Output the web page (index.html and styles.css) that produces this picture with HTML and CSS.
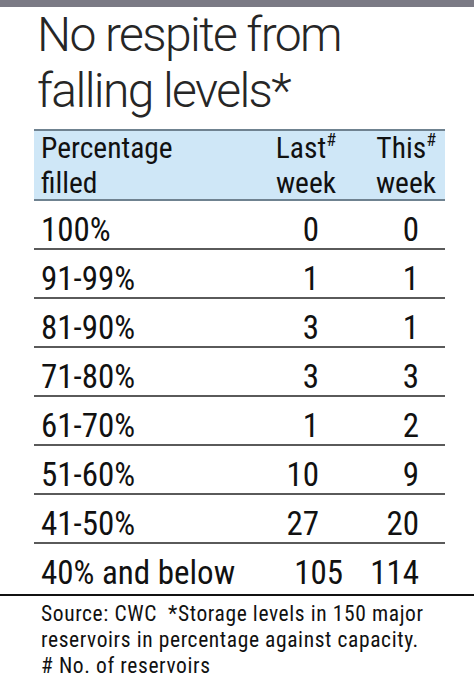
FILE: index.html
```html
<!DOCTYPE html>
<html>
<head>
<meta charset="utf-8">
<link rel="stylesheet" href="styles.css">
</head>
<body>
<div class="topbar"></div>
<h1 class="title">No respite from<br>falling levels*</h1>
<div class="table">
  <div class="row head">
    <div class="label">Percentage<br>filled</div>
    <div class="num">Last<sup>#</sup><br>week</div>
    <div class="num">This<sup>#</sup><br>week</div>
  </div>
  <div class="row"><div class="label">100%</div><div class="num v">0</div><div class="num v">0</div></div>
  <div class="row"><div class="label">91-99%</div><div class="num v">1</div><div class="num v">1</div></div>
  <div class="row"><div class="label">81-90%</div><div class="num v">3</div><div class="num v">1</div></div>
  <div class="row"><div class="label">71-80%</div><div class="num v">3</div><div class="num v">3</div></div>
  <div class="row"><div class="label">61-70%</div><div class="num v">1</div><div class="num v">2</div></div>
  <div class="row"><div class="label">51-60%</div><div class="num v">10</div><div class="num v">9</div></div>
  <div class="row"><div class="label">41-50%</div><div class="num v">27</div><div class="num v">20</div></div>
  <div class="row last"><div class="label">40% and below</div><div class="num v wide">105</div><div class="num v">114</div></div>
</div>
<div class="note">
  Source: CWC &nbsp;*Storage levels in 150 major<br>
  reservoirs in percentage against capacity.<br>
  # No. of reservoirs
</div>
</body>
</html>
```

FILE: styles.css
```css
html, body {
  margin: 0;
  padding: 0;
  background: #ffffff;
}
body {
  width: 474px;
  height: 680px;
  overflow: hidden;
  color: #111;
  font-family: "Roboto Condensed", "Liberation Sans Narrow", "DejaVu Sans Condensed", sans-serif;
  font-stretch: condensed;
}
.topbar {
  height: 7px;
  background: #7b7a85;
}
.title {
  margin: 0;
  padding: 0 0 0 37px;
  height: 118px;
  box-sizing: border-box;
  font-family: Roboto, "Open Sans", sans-serif;
  font-stretch: normal;
  font-weight: 300;
  font-size: 48px;
  line-height: 56px;
  color: #262626;
  letter-spacing: -1.6px;
}
.table {
  margin: 4px 29px 0 34px;
}
.row {
  display: grid;
  grid-template-columns: 1fr 100px 100px;
  padding: 0 9px 2px 7px;
  height: 49px;
  align-items: end;
  border-bottom: 2px solid #5a5a5a;
  box-sizing: border-box;
  font-size: 33px;
  line-height: 33px;
  white-space: nowrap;
}
.row.head {
  height: 72px;
  padding-bottom: 3px;
  align-items: center;
  background: #cfe7f7;
  border-top: 2px solid #6f8290;
  border-bottom: 2px solid #6f8290;
  font-size: 29.5px;
  line-height: 35px;
}
.row.last {
  border-bottom: none;
  height: 50px;
  padding-bottom: 5px;
}
.num {
  text-align: right;
}
.num sup {
  font-size: 18px;
  vertical-align: top;
  line-height: 18px;
}
.num.v {
  padding-right: 17px;
}
.num.v.wide {
  padding-right: 0;
  margin-right: -7px;
}
.note {
  border-top: 2px solid #111;
  padding: 5px 0 0 41px;
  font-size: 21.5px;
  line-height: 26px;
  letter-spacing: 0.6px;
  white-space: nowrap;
}
```
